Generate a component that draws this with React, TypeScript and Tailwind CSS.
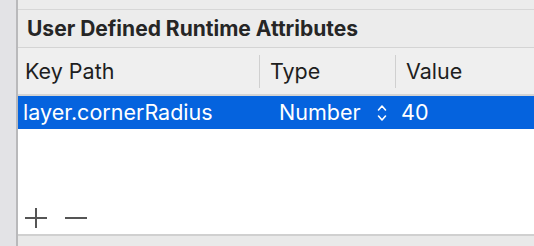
const App = () => {
  return (
    <div
      className="flex w-[534px] h-[246px] overflow-hidden bg-[#ececec] text-[#222]"
      style={{ fontFamily: 'Inter, "Noto Sans", sans-serif' }}
    >
      <div className="w-[16px] shrink-0 bg-[#e3e3e6]" />
      <div className="w-[2px] shrink-0 bg-[#b9b9bb]" />
      <div className="flex flex-1 flex-col">
        <div className="h-[10px] bg-[#ececec] border-b border-[#d7d7d7]" />
        <div className="flex h-[38px] items-center border-b border-[#d4d4d4] bg-[#ececec] pl-[9px] pt-[1px] text-[21px] font-bold text-[#262626]">
          User Defined Runtime Attributes
        </div>
        <div className="flex h-[48px] items-center border-b-2 border-[#d4d4d4] bg-[#efefef] text-[21.5px] text-[#1e1e1e]">
          <div className="w-[241px] pl-[7px]">Key Path</div>
          <div className="h-[33px] w-px bg-[#d0d0d0]" />
          <div className="w-[135px] pl-[10px]">Type</div>
          <div className="h-[33px] w-px bg-[#d0d0d0]" />
          <div className="pl-[10px]">Value</div>
        </div>
        <div className="flex h-[33px] items-center bg-[#0563de] text-[21.5px] text-white">
          <div className="w-[242px] pl-[5px]">layer.cornerRadius</div>
          <div className="flex w-[135px] items-center pl-[19px]">
            <span>Number</span>
            <svg className="ml-[16px]" width="10" height="20" viewBox="0 0 10 20" fill="none" stroke="white" strokeWidth="1.6" strokeLinecap="round" strokeLinejoin="round">
              <path d="M1.5 7 L5 3 L8.5 7" />
              <path d="M1.5 13 L5 17 L8.5 13" />
            </svg>
          </div>
          <div className="pl-[6px]">40</div>
        </div>
        <div className="flex flex-1 items-end bg-white pb-[5px] pl-[7px]">
          <div className="flex items-center gap-[18px]">
            <svg width="22" height="22" viewBox="0 0 22 22" stroke="#555" strokeWidth="2">
              <path d="M0 11 H22" />
              <path d="M11 1 V21" />
            </svg>
            <svg width="22" height="22" viewBox="0 0 22 22" stroke="#555" strokeWidth="2">
              <path d="M0 11 H22" />
            </svg>
          </div>
        </div>
        <div className="h-[12px] border-t-2 border-[#d0d0d0] bg-[#e9e9e9]" />
      </div>
    </div>
  );
};

export default App;
